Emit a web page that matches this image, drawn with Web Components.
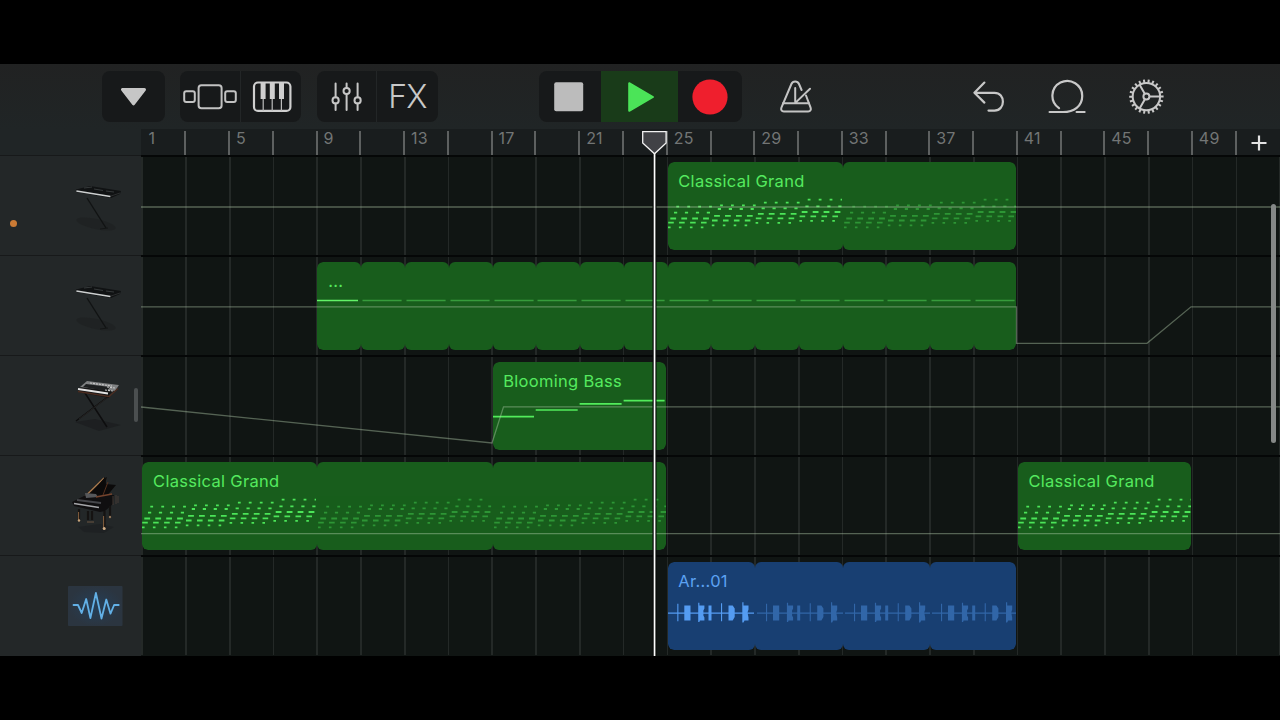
<!DOCTYPE html>
<html lang="en">
<head>
<meta charset="utf-8">
<title>Tracks</title>
<style>
html,body{margin:0;background:#000;height:100%;overflow:hidden}
body{font-family:Inter,"Liberation Sans",sans-serif}
</style>
</head>
<body>
<daw-app></daw-app>
<script>
const CELL = 43.77;
const define = (name, render) => customElements.define(name, class extends HTMLElement {
  connectedCallback() {
    if (this.shadowRoot) return;
    this.attachShadow({ mode: 'open' }).innerHTML = render(this);
  }
});

/* ---------- icons ---------- */
const ICONS = {
  down: [32, 24, '<path d="M4.500 4.500h22L15.500 18.800z" fill="#c6c6c6" stroke="#c6c6c6" stroke-width="3" stroke-linejoin="round"/>'],
  browser: [54, 30, '<g fill="none" stroke="#c2c2c2" stroke-width="2"><rect x="15.6" y="3.200" width="23" height="23" rx="2.8"/><rect x="1.2" y="9.200" width="10.6" height="10.8" rx="2"/><rect x="42.2" y="9.200" width="10.6" height="10.8" rx="2"/></g>'],
  keys: [40, 32, '<rect x="2" y="1.500" width="36.4" height="28.4" rx="4" fill="none" stroke="#cfcfcf" stroke-width="2.2"/><path d="M11.2 18v12M20.2 18v12M29.4 18v12" stroke="#bdbdbd" stroke-width="1.2"/><path d="M8.6 2h5v16h-5zM17.8 2h5v16h-5zM27 2h5v16h-5z" fill="#cfcfcf"/>'],
  mixer: [32, 30, '<g transform="translate(-.4 -.4)" fill="none" stroke="#c6c6c6" stroke-width="2" stroke-linecap="round"><path d="M5 2v13.6M5 22v6.4M16 2v4.2M16 12.6v15.8M27 2v13.6M27 22v6.4"/><circle cx="5" cy="18.8" r="3.1"/><circle cx="16" cy="9.4" r="3.1"/><circle cx="27" cy="18.8" r="3.1"/></g>'],
  stop: [32, 32, '<rect x="1.2" y="1.2" width="29" height="29" rx="2" fill="#bcbcbc"/>'],
  play: [30, 34, '<path d="M4.200 3.2v27.6L28 17z" fill="#4be458" stroke="#4be458" stroke-width="2" stroke-linejoin="round"/>'],
  rec: [36, 36, '<circle cx="18" cy="18" r="17.6" fill="#ef1f2d"/>'],
  metro: [34, 34, '<g fill="none" stroke="#c4c4c4" stroke-width="2" stroke-linecap="round" stroke-linejoin="round"><path d="M27 15.500l4.600 12.100c.8 2.200-.2 3.800-2.400 3.800H4.800c-2.200 0-3.200-1.600-2.400-3.800L12.400 4c1.400-3.400 6.200-3.400 7.600 0l2.600 6"/><path d="M4 23.300h26M16.200 8v13.500M16.600 22.600L31 8.800"/></g>'],
  undo: [34, 34, '<g fill="none" stroke="#c8c8c8" stroke-width="2.2" stroke-linecap="round" stroke-linejoin="round"><path d="M12.400 2.600L2.400 12.800l10 9.800M2.800 12.800H22.500c11.200 0 11.200 17.800 0 17.800h-6"/></g>'],
  loop: [38, 36, '<g fill="none" stroke="#c8c8c8" stroke-width="2.200" stroke-linecap="round"><path d="M1.600 33H15C26 33 34.200 27 34.200 17.200A14.900 14.900 0 1 0 11 29.200M28.600 33H36.600"/></g>'],
  plus: [18, 18, '<path d="M9 1.500v15M1.500 9h15" stroke="#e2e2e2" stroke-width="2.200"/>'],
};
{
  let teeth = '';
  for (let i = 0; i < 22; i++) teeth += `<path d="M18 .8v3.400" transform="rotate(${i * 360 / 22 + 8} 18 18)"/>`;
  ICONS.gear = [36, 36, `<g transform="translate(.4 -.4)" fill="none" stroke="#c8c8c8" stroke-width="2"><circle cx="18" cy="18" r="13.700"/>${teeth}<circle cx="18" cy="18" r="3"/><path d="M21 18h10.700M16.500 15.400L11.200 6.200M16.500 20.600L11.200 29.800"/></g>`];
}
ICONS.stage = [60, 60, `
  <ellipse cx="26" cy="49" rx="20" ry="5" transform="rotate(12 26 49)" fill="#1b1d1e" opacity=".5"/>
  <path d="M17 23L36 53" stroke="#111313" stroke-width="1.400"/><path d="M30 54l8-1" stroke="#141616" stroke-width="1"/>
  <path d="M6 14.500l14-3.500 31 5-1 3-9 4L6 17z" fill="#101213"/>
  <path d="M14 13l8-1M24 14l9 1.500M36 16l8 1" stroke="#35393a" stroke-width="1"/>
  <path d="M6.400 16l34 5.500" stroke="#cdd0d0" stroke-width="1.500"/>
  <path d="M41 21l9-3" stroke="#2b2d2e" stroke-width="1"/>`];
ICONS.synth = [60, 60, `
  <path d="M5 49l20-3 26 6-22 6z" fill="#1a1c1d" opacity=".65"/>
  <path d="M15 20L37 54M39 23L6 48" stroke="#0d0d0e" stroke-width="1.500"/><path d="M38 24L9 46" stroke="#34302e" stroke-width=".6"/>
  <path d="M8 17l9-8 32 3-10 10v3L8 19z" fill="#151515"/>
  <path d="M10 14l7-6 32 4-4 6z" fill="#7f8182"/>
  <path d="M16 11l24 3-3 4-24-4z" fill="#1c1e1f"/><path d="M20 10l22 3M37 14l8 1M35 17l8 1" stroke="#c6c6c6" stroke-width="1.200" stroke-dasharray="2 1"/>
  <path d="M8 16L38 20.500" stroke="#e2e2e2" stroke-width="2"/><path d="M8 18.500l31 5 9-8" fill="none" stroke="#4b2c20" stroke-width="1.300"/>`];
ICONS.piano = [60, 64, `
  <path d="M8 54l22-3 14 3-10 6-20-1z" fill="#1a1c1d" opacity=".5"/>
  <path d="M15 24L35 5l2-1-5 17z" fill="#100d0c"/><path d="M15 23.500L34 5" stroke="#ab7a4d" stroke-width="1.300"/>
  <path d="M35 4l1 7 10 1-10 12-17-1z" fill="#0b0a0a"/><path d="M38 9l-5 13" stroke="#55301e" stroke-width="1"/>
  <path d="M2 29l14-7h28l-1 9-8 7-5 1-26-6z" fill="#100f10"/>
  <path d="M15 20l11 1 2 3-12 1z" fill="#55575a"/><path d="M26 24l16-3" stroke="#75442d" stroke-width="1.500"/>
  <path d="M4 30.500l25 4" stroke="#a5a6a9" stroke-width="1.600"/><path d="M7 27l24 3" stroke="#45464a" stroke-width="1.800"/>
  <path d="M9 36v11M34.500 38v17M40 33v11M18 38v9M22 38v9" stroke="#151312" stroke-width="2.200"/>
  <path d="M8.600 39v9M33.600 43v12" stroke="#86603f" stroke-width="1"/>
  <path d="M43 23v9M46 22v9M48 23v7" stroke="#4e423b" stroke-width=".8"/>
  <circle cx="9" cy="47.500" r="1.200" fill="#c5a27a"/><circle cx="34.200" cy="55.500" r="1.500" fill="#d0ad86"/><circle cx="40" cy="44" r="1.200" fill="#8f7358"/><path d="M17 49h7" stroke="#6d5643" stroke-width="1"/>`];
ICONS.wave = [60, 44, `<defs><radialGradient id="g"><stop offset="0" stop-color="#263e56"/><stop offset="1" stop-color="#2b3540"/></radialGradient></defs><rect x="2" y="2" width="54.500" height="40" rx="1" fill="url(#g)"/>
  <path d="M7.500 21h4.500l3.700 8 4.500-14 4.200 19L29.900 9l5.600 25.500 4.800-19 4.200 14.200 3.600-8.700h4.600" fill="none" stroke="#62b0e6" stroke-width="1.800" stroke-linejoin="round" stroke-linecap="round"/>`];

define('daw-icon', el => {
  const [w, h, body] = ICONS[el.getAttribute('name')];
  return `<style>:host{display:block;flex:none;width:${w}px;height:${h}px}svg{display:block}</style>
  <svg width="${w}" height="${h}" viewBox="0 0 ${w} ${h}">${body}</svg>`;
});

/* ---------- toolbar ---------- */
define('tool-group', () => `<style>
:host{display:flex;height:51px;border-radius:8px;background:#17191a;overflow:hidden;box-sizing:border-box}
</style><slot></slot>`);
define('tool-button', el => `<style>
:host{display:flex;align-items:center;justify-content:center;box-sizing:border-box;width:${el.getAttribute('w')}px;height:100%;
${el.hasAttribute('divided') ? 'border-left:1px solid #232627;' : ''}${el.hasAttribute('active') ? 'background:#193b19;' : ''}}
</style><slot></slot>`);
define('daw-toolbar', () => `<style>
:host{display:flex;align-items:flex-start;height:65px;box-sizing:border-box;padding:7px 0 0 102px;background:linear-gradient(#212222,#202526)}
.a{margin-left:15px}.b{margin-left:16px}.c{margin-left:101px}
.bare{display:flex;align-items:center;height:51px}
.fx{font:350 32px/52px Inter,sans-serif;color:#c8c8c8;letter-spacing:-.7px}
</style>
<tool-group><tool-button w="63"><daw-icon name="down"></daw-icon></tool-button></tool-group>
<tool-group class="a"><tool-button w="60"><daw-icon name="browser"></daw-icon></tool-button><tool-button w="61" divided><daw-icon name="keys" style="margin-left:2px"></daw-icon></tool-button></tool-group>
<tool-group class="b"><tool-button w="59"><daw-icon name="mixer"></daw-icon></tool-button><tool-button w="62" divided><span class="fx">FX</span></tool-button></tool-group>
<tool-group class="c"><tool-button w="62"><daw-icon name="stop" style="margin-right:2px"></daw-icon></tool-button><tool-button w="77" active><daw-icon name="play"></daw-icon></tool-button><tool-button w="64"><daw-icon name="rec"></daw-icon></tool-button></tool-group>
<div class="bare" style="margin-left:37px"><daw-icon name="metro"></daw-icon></div>
<div class="bare" style="margin-left:159px"><daw-icon name="undo"></daw-icon></div>
<div class="bare" style="margin-left:42px"><daw-icon name="loop"></daw-icon></div>
<div class="bare" style="margin-left:42px"><daw-icon name="gear"></daw-icon></div>`);

/* ---------- ruler ---------- */
define('bar-ruler', () => {
  let cells = '';
  for (let i = 0; i < 25; i++) cells += `<div class="t">${i % 2 ? '' : `<span>${i * 2 + 1}</span>`}</div>`;
  return `<style>
:host{display:grid;grid-template-columns:141px 1fr 43px;height:26px;background:#202526}
.cells{display:grid;grid-template-columns:repeat(25,${CELL}px);background:#191d1e;padding-left:1.600px}
.t{height:26px;box-sizing:border-box;padding-left:5.900px;font-size:16px;line-height:20px;color:#727575;letter-spacing:.2px;
background:linear-gradient(#5d6060,#5d6060) 100% 2px/2px 24px no-repeat}
span{display:block;height:20px;margin-top:-1px;padding-top:0}
.t{display:flow-root}
.add{display:flex;align-items:center;justify-content:center;background:#191d1e;padding-top:1px}
</style><div></div><div class="cells">${cells}</div><div class="add"><daw-icon name="plus"></daw-icon></div>`;
});

/* ---------- region contents ---------- */
const NOTE_ROWS = [
  [65.300, 60.700, 56.500, 50.700, 44.700],
  [63.300, 58.500, 53.900, 47, 43.400],
  [60.900, 56.300, 51.900, 46.300, 40.700],
  [58.900, 54.300, 50, 44.300, 37.700],
];
function pianoNotes(shift) {
  const xs = [[0, 2.600], [.2, 5.600], [2.300, 5.800], [6, 3.200], [8.300, 2.800]];
  let d = '';
  for (let k = 0; k < 16; k++) NOTE_ROWS[k >> 2].forEach((y, r) => {
    const x = k * 10.950 + xs[r][0] + shift;
    if (x < 173) d += `M${x.toFixed(1)} ${y}h${Math.min(xs[r][1], 174 - x).toFixed(1)}`;
  });
  return `<path d="${d}" stroke="#4be458" stroke-width="1.800" fill="none"/>`;
}
const CONTENT = {
  piano: i => pianoNotes(i ? 1 : 0),
  drone: i => `<path d="M${i ? 1.500 : 0} 38.400H${i ? 40.600 : 41}" stroke="#63f268" stroke-width="1.500"/>`,
  bass: () => `<path d="M0 54.700h41M42.700 48h42M86.600 41.900h42M130.600 38.600h41" stroke="#52ec5b" stroke-width="1.700"/>`,
  audio: i => `<g fill="#549cf2" transform="translate(${i ? 1.700 : 0} .3)"><path d="M${i ? .3 : 0} 50.200h86v1.200h-86zM9.300 41.500h1.100v17.500H9.300zM16.300 43.200h6.200v15h-6.200zM30.200 40.500h1.200v2.700h5v3l-1 2 0 5 1 2v3h-4.500l-.5 1.500h-1.200zM40.500 43.200h3v15h-3zM53 41h1.100v18H53zM60.500 43.200h4.200l2 3v8.500l-2 3.500h-4.200zM74.300 40h1.200v3.200h5l0 4-1 3 1 5v3h-4l-1 2h-1.200z"/></g>`,
};
define('track-region', el => {
  const n = +el.getAttribute('loops'), cells = +el.getAttribute('cells'), kind = el.getAttribute('kind');
  const w = CELL * cells, blue = kind === 'audio';
  let segs = '';
  for (let i = 0; i < n; i++) segs += `<div class="seg"><svg width="${w}" height="88" opacity="${i ? (blue ? .42 : .42) : 1}">${CONTENT[kind](i)}</svg></div>`;
  return `<style>
:host{display:grid;grid-row:1;grid-column:${+el.getAttribute('start') + 1}/span ${n * cells};height:87.500px;margin:5px 1.600px 0 .2px;border-radius:6px;overflow:hidden;z-index:1}
.segs{display:grid;grid-template-columns:repeat(${n - 1},${w}px) 1fr;grid-area:1/1}
.segs.one{grid-template-columns:1fr}
.seg{background:${blue ? '#183f72' : '#185d1c'};border-radius:6px;overflow:hidden}
svg{display:block}
.name{grid-area:1/1;z-index:1;padding:8.500px 0 0 10.700px;font-size:16.500px;line-height:20px;font-weight:400;letter-spacing:.3px;color:${blue ? '#5ca2f2' : '#55ea5f'};white-space:nowrap}
</style><div class="segs${n === 1 ? ' one' : ''}">${segs}</div><div class="name"><slot></slot></div>`;
});

/* ---------- tracks ---------- */
define('track-row', el => `<style>
:host{display:grid;grid-template-columns:141px 1fr;height:100.100px;position:relative}
.head{background:#232728;border-top:1px solid #17191a;box-sizing:border-box;padding:${el.getAttribute('pad')};overflow:hidden}
.lane{display:grid;grid-template-columns:repeat(26,${CELL}px);border-top:2px solid #050707;box-sizing:border-box;overflow:hidden;padding-left:1.200px;
background:repeating-linear-gradient(90deg,transparent 0 .3px,#242927 .3px 2px,transparent 2px ${CELL}px) #101513}
.auto{position:absolute;left:141px;top:0;z-index:2;pointer-events:none}
</style>
<div class="head"><daw-icon name="${el.getAttribute('icon')}"></daw-icon></div>
<div class="lane"><slot></slot></div>
<svg class="auto" width="1139" height="100"><path d="${el.getAttribute('auto')}" fill="none" stroke="#b5cfae" stroke-opacity=".42" stroke-width="1.300"/></svg>`);

define('play-head', () => `<style>
:host{display:block;position:absolute;left:641px;top:66px;width:27px;height:526px;z-index:5}
svg{display:block}
</style><svg width="27" height="526"><path d="M11.500 22h4v504h-4z" fill="#070a08"/><path d="M12.700 23h1.700v503h-1.700z" fill="#fff"/><path d="M1.700 1.700h23.400V13L13.500 23.800 1.700 13z" fill="#414246" stroke="#f2f2f2" stroke-width="1.300"/></svg>`);
define('scroll-thumb', el => `<style>
:host{display:block;position:absolute;z-index:6;border-radius:3px;${el.getAttribute('box')}}
</style>`);

define('daw-app', () => `<style>
:host{display:block;position:relative;margin-top:64px;width:1280px;height:592px;overflow:hidden;background:linear-gradient(90deg,#232728 141px,#101513 141px)}
</style>
<daw-toolbar></daw-toolbar>
<bar-ruler></bar-ruler>
<track-row icon="stage" pad="19px 0 0 70px" auto="M0 52H1139"><track-region start="12" cells="4" loops="2" kind="piano">Classical Grand</track-region></track-row>
<track-row icon="stage" pad="19px 0 0 70px" auto="M0 51.800H875.500V88.300H1006L1050 51.800H1139"><track-region start="4" cells="1" loops="16" kind="drone">...</track-region></track-row>
<track-row icon="synth" pad="17px 0 0 70px" auto="M0 52L351 88L362.500 51.800H1139"><track-region start="8" cells="4" loops="1" kind="bass">Blooming Bass</track-region></track-row>
<track-row icon="piano" pad="17px 0 0 70px" auto="M0 78.600H1139"><track-region start="0" cells="4" loops="3" kind="piano">Classical Grand</track-region><track-region start="20" cells="4" loops="1" kind="piano">Classical Grand</track-region></track-row>
<track-row icon="wave" pad="28px 0 0 66px" auto=""><track-region start="12" cells="2" loops="4" kind="audio">Ar...01</track-region></track-row>
<play-head></play-head>
<scroll-thumb box="left:1271px;top:140px;width:4.500px;height:239px;background:#858887"></scroll-thumb>
<scroll-thumb box="left:133.500px;top:324px;width:4.500px;height:34px;background:#4b4f50"></scroll-thumb>
<scroll-thumb box="left:9.800px;top:155.500px;width:7.500px;height:7.500px;border-radius:50%;background:#cb7b35"></scroll-thumb>`);
</script>
</body>
</html>
